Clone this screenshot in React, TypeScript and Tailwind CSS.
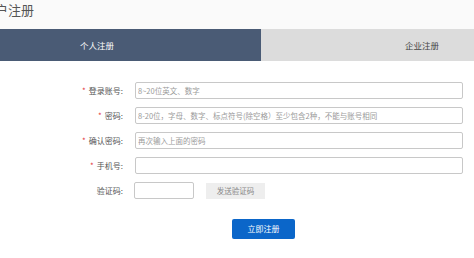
/* eslint-disable */
// @ts-nocheck
const FONT = { fontFamily: '"Microsoft YaHei", "Noto Sans CJK SC", "Liberation Sans", sans-serif' };

const fields = [
  { label: "登录账号", required: true, placeholder: "8~20位英文、数字" },
  { label: "密码", required: true, placeholder: "8-20位，字母、数字、标点符号(除空格）至少包含2种，不能与账号相同" },
  { label: "确认密码", required: true, placeholder: "再次输入上面的密码" },
  { label: "手机号", required: true, placeholder: "" },
];

function Label({ text, required }: { text: string; required?: boolean }) {
  return (
    <div className="w-[123px] shrink-0 text-right text-[8px] leading-none text-[#555]">
      {required && <span className="mr-[3px] text-[#e4393c]">*</span>}
      {text}:
    </div>
  );
}

export default function App() {
  return (
    <div className="h-[258px] w-[474px] overflow-hidden bg-white" style={FONT}>
      <div className="h-[29px] overflow-hidden bg-[#fafafa] pt-[3px]">
        <div className="ml-[-18px] text-[13px] leading-[14px] text-[#555]">用户注册</div>
      </div>

      <div className="flex h-[32px]">
        <div className="flex w-[261px] items-center bg-[#4a5b75] pl-[80px] text-[8.5px] text-white">个人注册</div>
        <div className="flex flex-1 items-center bg-[#dcdcdc] pl-[144px] text-[8.5px] text-[#444]">企业注册</div>
      </div>

      <div className="flex flex-col gap-[8px] pt-[21px]">
        {fields.map((f) => (
          <div key={f.label} className="flex h-[17px] items-center gap-[12px]">
            <Label text={f.label} required={f.required} />
            <input
              className="h-[17px] w-[328px] rounded-[2px] border border-[#c8c8c8] bg-white px-[2px] text-[7.5px] text-[#333] outline-none placeholder:text-[#9a9a9a]"
              placeholder={f.placeholder}
            />
          </div>
        ))}
        <div className="flex h-[17px] items-center gap-[11px]">
          <Label text="验证码" />
          <input className="h-[17px] w-[60px] rounded-[2px] border border-[#c8c8c8] bg-white outline-none" />
          <button className="ml-[1px] h-[16px] w-[59px] bg-[#eeeeee] text-[7.5px] text-[#888]">发送验证码</button>
        </div>
      </div>

      <div className="pl-[232px] pt-[14px]">
        <button className="h-[20px] w-[63px] rounded-[2px] bg-[#0b66c9] text-[8px] text-white">立即注册</button>
      </div>
    </div>
  );
}
